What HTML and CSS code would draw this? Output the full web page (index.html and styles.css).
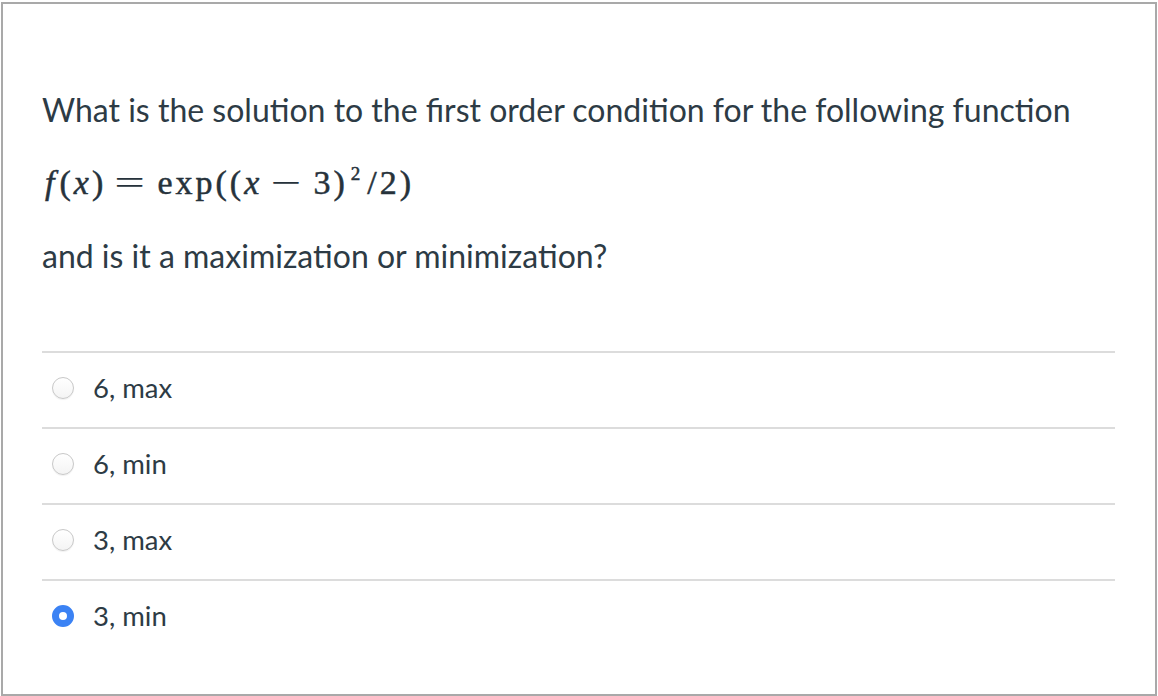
FILE: index.html
```html
<!DOCTYPE html>
<html>
<head>
<meta charset="utf-8">
<link rel="stylesheet" href="styles.css">
</head>
<body>
<div class="frame">
  <div class="question">
    <p class="q-line">What is the solution to the first order condition for the following function</p>
    <p class="math"><span class="it f">f</span>(<span class="it">x</span>)<span class="op">=</span>exp((<span class="it">x</span><span class="op">−</span>3)<sup>2</sup><span class="slash">/</span>2)</p>
    <p class="q-line last">and is it a maximization or minimization?</p>
  </div>
  <div class="answers">
    <div class="answer"><span class="radio"></span><span class="label">6, max</span></div>
    <div class="answer"><span class="radio"></span><span class="label">6, min</span></div>
    <div class="answer"><span class="radio"></span><span class="label">3, max</span></div>
    <div class="answer"><span class="radio checked"></span><span class="label">3, min</span></div>
  </div>
</div>
</body>
</html>
```
FILE: styles.css
```css
html, body {
  margin: 0;
  padding: 0;
  background: #ffffff;
}
.frame {
  box-sizing: border-box;
  margin: 2px 1px 0 1px;
  height: 694px;
  border: 2px solid #a9a9a9;
  padding: 0 40px 0 39px;
  font-family: Lato, "Noto Sans", sans-serif;
  color: #2d3b45;
}
.question {
  padding-top: 83px;
}
.q-line {
  margin: 0;
  font-size: 32px;
  line-height: 45px;
}
.q-line.last {
  margin-top: 28px;
}
.math {
  margin: 28px 0 0 0;
  font-family: "Liberation Serif", "DejaVu Serif", serif;
  font-size: 34px;
  line-height: 45px;
  letter-spacing: 3px;
  color: #26323b;
  -webkit-text-stroke: 0.5px #26323b;
  white-space: nowrap;
}
.math .it { font-style: italic; }
.math .f { margin-left: 3px; margin-right: 2px; }
.math .op {
  display: inline-block;
  transform: scaleX(1.6);
  margin: 0 18px 0 14px;
  letter-spacing: 0;
  -webkit-text-stroke: 0;
}
.math sup {
  font-size: 19px;
  line-height: 0;
  vertical-align: 14px;
  margin-left: 3px;
}
.math .slash {
  margin-left: 4px;
}
.answers {
  margin-top: 73px;
}
.answer {
  display: flex;
  align-items: center;
  box-sizing: border-box;
  height: 76px;
  border-top: 2px solid #dcdcdc;
  padding: 0 0 4px 10px;
  gap: 19px;
}
.radio {
  box-sizing: border-box;
  width: 22px;
  height: 22px;
  border-radius: 50%;
  border: 1px solid #c8c8c8;
  background: linear-gradient(#ffffff, #f4f4f4);
  box-shadow: 0 1px 1px rgba(0,0,0,0.06);
  flex: none;
}
.radio.checked {
  border: 7px solid #3b82f4;
  background: #ffffff;
  box-shadow: none;
}
.label {
  font-size: 27.5px;
  line-height: 30px;
}
```
